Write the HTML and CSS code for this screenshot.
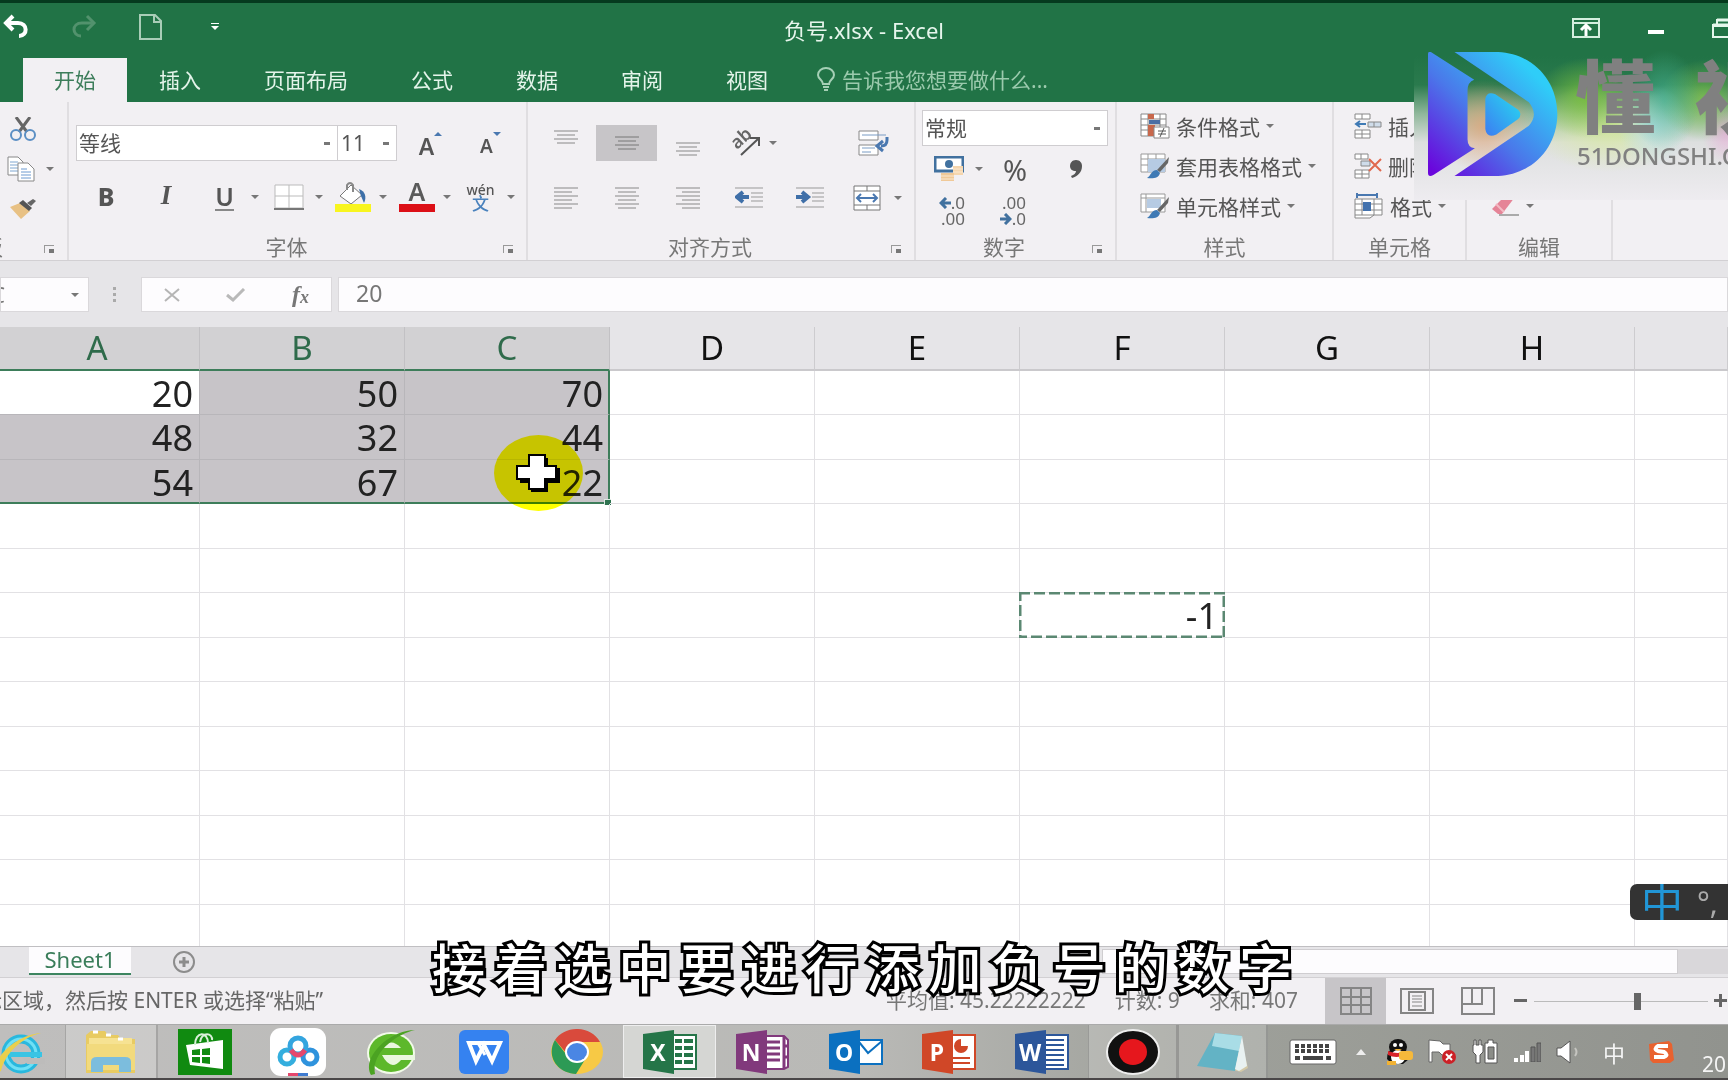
FILE: index.html
```html
<!DOCTYPE html>
<html lang="zh-CN">
<head>
    <meta charset="UTF-8">
    <meta name="viewport" content="width=device-width, initial-scale=1.0">
    <title>负号.xlsx - Excel</title>
    <link rel="stylesheet" href="styles.css">
</head>
<body>
    <header class="titlebar">
        <div class="quick-access">
            <button aria-label="撤消"><svg width="26" height="26" viewBox="0 0 26 26" fill="none" stroke="#fff" stroke-width="4"><path d="M3 9h12c10 0 10 13 1 13"/><path d="M10 2L3 9l7 7"/></svg></button>
            <button aria-label="恢复"><svg width="26" height="26" viewBox="0 0 26 26" fill="none" stroke="#52926d" stroke-width="3"><path d="M23 9H11C0 9 1 22 10 22"/><path d="M16 2l7 7-7 7"/></svg></button>
            <button aria-label="新建"><svg width="24" height="26" viewBox="0 0 24 26" fill="none" stroke="#a9cdb7" stroke-width="2"><path d="M1 1h15l6 6v18H1z"/><path d="M15 1v7h7"/></svg></button>
            <button class="customize" aria-label="自定义快速访问工具栏"><svg width="10" height="8" viewBox="0 0 10 8" fill="#fff"><path d="M1 0h8v1H1zM1 3h8L5 7z"/></svg></button>
        </div>
        <h1 class="doc-title">负号.xlsx - Excel</h1>
        <div class="window-controls">
            <button aria-label="功能区显示选项"><svg width="28" height="20" viewBox="0 0 28 20" fill="none" stroke="#d5efdf" stroke-width="2"><path d="M1 1h26v18H1zM1 5h26"/><path d="M14 18V8M9 12l5-5 5 5" stroke="#fff" stroke-width="3"/></svg></button>
            <button aria-label="最小化"><svg width="16" height="20" viewBox="0 0 16 20"><path d="M0 12h16v4H0z" fill="#fff"/></svg></button>
            <button aria-label="向下还原"><svg width="28" height="20" viewBox="0 0 28 20" fill="none" stroke="#e5f7ec" stroke-width="2"><path d="M1 7h20v12H1zM1 8h20M5 6V2h20v11h-4" /><path d="M5 2h20M1 7h20" stroke-width="3"/></svg></button>
        </div>
    </header>

    <nav class="tabs">
        <button class="tab active">开始</button>
        <button class="tab">插入</button>
        <button class="tab">页面布局</button>
        <button class="tab">公式</button>
        <button class="tab">数据</button>
        <button class="tab">审阅</button>
        <button class="tab">视图</button>
        <button class="tell-me"><svg width="18" height="24" viewBox="0 0 18 24" fill="none" stroke="#a5d0b6" stroke-width="2"><path d="M6 17c0-4-5-5-5-9a8 7 0 0 1 16 0c0 4-5 5-5 9z"/><path d="M6 20h6M7 23h4"/></svg>告诉我您想要做什么...</button>
    </nav>

    <section class="ribbon">
        <div class="group clipboard">
            <div class="rows">
                <button aria-label="剪切"><svg width="26" height="24" viewBox="0 0 26 24" fill="none" stroke-width="2"><path d="M6 0l11 15M20 0L9 15" stroke="#666" stroke-width="3"/><circle cx="6" cy="18" r="5" stroke="#5b8fc4"/><circle cx="20" cy="18" r="5" stroke="#5b8fc4"/></svg></button>
                <button class="copy" aria-label="复制"><svg width="28" height="26" viewBox="0 0 28 26" fill="#fff" stroke="#888"><path d="M1 1h10l5 5v13H1z"/><path d="M3 6h8M3 9h9M3 12h9M3 15h9" stroke="#7fa6d0"/><path d="M11 7h10l6 6v12H11z"/><path d="M14 13h6M14 16h10M14 19h10M14 22h10" stroke="#6c9ad0"/></svg><i class="caret"></i></button>
                <button aria-label="格式刷"><svg width="26" height="20" viewBox="0 0 26 20"><path d="M0 8l10-4 10 8-9 8z" fill="#e8c184"/><path d="M9 4l4-3 9 8-3 3z" fill="#555"/><path d="M17 4l6-4 3 2-5 5z" fill="#666"/></svg></button>
            </div>
            <div class="group-label"><span>剪贴板</span><i class="launcher"></i></div>
        </div>

        <div class="group font">
            <div class="row">
                <select class="font-name" aria-label="字体"><option>等线</option></select>
                <select class="font-size" aria-label="字号"><option>11</option></select>
                <button class="grow" aria-label="增大字号"><span>A</span><i class="up"></i></button>
                <button class="grow small" aria-label="减小字号"><span>A</span><i class="down"></i></button>
            </div>
            <div class="row">
                <button class="plain bold">B</button>
                <button class="plain italic">I</button>
                <button class="split underline"><span>U</span><i class="caret"></i></button>
                <button class="split" aria-label="边框"><svg width="30" height="26" viewBox="0 0 30 26" fill="#fff" stroke="#bbb"><path d="M1 1h28v23H1zM15 1v23M1 12h28"/><path d="M0 25h30" stroke="#777" stroke-width="2"/></svg><i class="caret"></i></button>
                <button class="split" aria-label="填充颜色"><svg width="36" height="30" viewBox="0 0 36 30"><path d="M5 14L16 3l11 10-11 9z" fill="#fff" stroke="#777"/><path d="M12 8V3q3-4 6 0v7" fill="none" stroke="#888" stroke-width="2"/><path d="M24 7c6 2 8 8 5 14l-3-7z" fill="#3d6fa8"/><path d="M0 22h36v8H0z" fill="#f8f51f"/></svg><i class="caret"></i></button>
                <button class="split" aria-label="字体颜色"><svg width="36" height="30" viewBox="0 0 36 30"><text x="18" y="19" class="svg-a">A</text><path d="M0 22h36v8H0z" fill="#dc0f16"/></svg><i class="caret"></i></button>
                <button class="split pinyin" aria-label="拼音"><span>wén<b>文</b></span><i class="caret"></i></button>
            </div>
            <div class="group-label"><span>字体</span><i class="launcher"></i></div>
        </div>

        <div class="group align">
            <div class="align-grid">
                <button aria-label="顶端对齐"><svg width="24" height="26" viewBox="0 0 24 26" stroke="#888"><path d="M0 1h24M3 5h18M0 9h24M3 13h18"/></svg></button>
                <button class="pressed" aria-label="垂直居中"><svg width="24" height="26" viewBox="0 0 24 26" stroke="#777"><path d="M0 7h24M3 11h18M0 15h24M3 19h18"/></svg></button>
                <button aria-label="底端对齐"><svg width="24" height="26" viewBox="0 0 24 26" stroke="#888"><path d="M0 13h24M3 17h18M0 21h24M3 25h18"/></svg></button>
                <button class="with-caret" aria-label="方向"><svg width="30" height="26" viewBox="0 0 30 26"><text x="0" y="0" class="svg-ab" transform="translate(6 20) rotate(-42)">ab</text><path d="M10 25L27 9M19 8h9v8" fill="none" stroke="#555" stroke-width="2"/></svg><i class="caret"></i></button>
                <span></span>
                <button aria-label="自动换行"><svg width="32" height="26" viewBox="0 0 32 26" fill="#fff" stroke="#888"><path d="M1 1h19v9H1zM1 15h19v10H1z"/><path d="M4 5h24" stroke="#7a9cc4"/><path d="M4 18h13M4 22h9" stroke="#7a9cc4"/><path d="M29 7v3q0 6-6 6M25 11l-6 5 6 5" fill="none" stroke="#4a78b0" stroke-width="3"/></svg></button>
                <button aria-label="左对齐"><svg width="24" height="22" viewBox="0 0 24 22" stroke="#888"><path d="M0 1h24M0 5h18M0 9h24M0 13h18M0 17h24M0 21h18"/></svg></button>
                <button aria-label="居中"><svg width="24" height="22" viewBox="0 0 24 22" stroke="#888"><path d="M0 1h24M3 5h18M0 9h24M3 13h18M0 17h24M3 21h18"/></svg></button>
                <button aria-label="右对齐"><svg width="24" height="22" viewBox="0 0 24 22" stroke="#888"><path d="M0 1h24M6 5h18M0 9h24M6 13h18M0 17h24M6 21h18"/></svg></button>
                <button aria-label="减少缩进量"><svg width="28" height="22" viewBox="0 0 28 22" fill="none" stroke="#999"><path d="M0 1h28M16 6h12M16 10h12M16 14h12M0 20h28"/><path d="M14 10H3M8 5l-6 5 6 5" stroke="#3f6fa8" stroke-width="4"/></svg></button>
                <button aria-label="增加缩进量"><svg width="28" height="22" viewBox="0 0 28 22" fill="none" stroke="#999"><path d="M0 1h28M16 6h12M16 10h12M16 14h12M0 20h28"/><path d="M0 10h11M6 5l6 5-6 5" stroke="#3f6fa8" stroke-width="4"/></svg></button>
                <button class="with-caret merge" aria-label="合并后居中"><svg width="28" height="26" viewBox="0 0 28 26" fill="#fff" stroke="#777"><path d="M1 1h26v24H1zM1 6h26M1 20h26M14 1v5M14 20v5"/><path d="M4 13h20M8 9l-4 4 4 4M20 9l4 4-4 4" fill="none" stroke="#4a78b0" stroke-width="2"/></svg><i class="caret"></i></button>
            </div>
            <div class="group-label"><span>对齐方式</span><i class="launcher"></i></div>
        </div>

        <div class="group number">
            <div class="rows">
                <select class="number-format" aria-label="数字格式"><option>常规</option></select>
                <div class="row">
                    <button class="split" aria-label="会计数字格式"><svg width="30" height="26" viewBox="0 0 30 26"><path d="M1 1h28v14H1z" fill="#fff" stroke="#41719f" stroke-width="3"/><circle cx="15" cy="8" r="4" fill="#41719f"/><path d="M19 10h10v9H19z" fill="#f5d6ae"/><path d="M7 17h13v8H7z" fill="#f0c998"/><path d="M19 13h10M19 16h10M7 20h13M7 23h13" stroke="#fbe9d2"/></svg><i class="caret"></i></button>
                    <button class="percent">%</button>
                    <button class="comma" aria-label="千位分隔样式"><svg width="12" height="18" viewBox="0 0 12 18"><path d="M6 0c4 0 6 3 6 6 0 6-4 10-10 12l-1-2c3-1 5-3 5-5-4 0-6-2-6-5s2-6 6-6z" fill="#555"/></svg></button>
                </div>
                <div class="row">
                    <button class="decimal" aria-label="增加小数位数"><span><svg width="12" height="12" viewBox="0 0 12 12" fill="none" stroke="#41719f" stroke-width="3"><path d="M12 6H2M7 1L2 6l5 5"/></svg>.0</span><span>.00</span></button>
                    <button class="decimal" aria-label="减少小数位数"><span>.00</span><span><svg width="12" height="12" viewBox="0 0 12 12" fill="none" stroke="#41719f" stroke-width="3"><path d="M0 6h10M5 1l5 5-5 5"/></svg>.0</span></button>
                </div>
            </div>
            <div class="group-label"><span>数字</span><i class="launcher"></i></div>
        </div>

        <div class="group styles">
            <div class="rows">
                <button class="command"><svg width="30" height="26" viewBox="0 0 30 26"><path d="M1 1h25v22H1zM1 6h25M1 12h25M1 17h25M8 1v22M20 1v22" fill="#fff" stroke="#888"/><path d="M8 1h6v5H8zM8 12h7v11H8z" fill="#c8684c"/><path d="M9 7h11v4H9z" fill="#4b6fa5"/><path d="M14 14h15v11H14z" fill="#fff" stroke="#888"/><path d="M18 18h8M18 21h8M24 15l-4 9" stroke="#555"/></svg>条件格式<i class="caret"></i></button>
                <button class="command"><svg width="30" height="26" viewBox="0 0 30 26"><path d="M1 1h24v18H1zM1 6h24M1 12h24M8 1v18M16 1v18" fill="#fff" stroke="#999"/><path d="M8 6h17v13H8z" fill="#b6cbe3"/><path d="M29 4l-1 6-8 9-3-2z" fill="#666"/><path d="M17 17l3 3c-1 5-7 6-13 5 4-2 4-8 10-8z" fill="#3f7ab5"/></svg>套用表格格式<i class="caret"></i></button>
                <button class="command"><svg width="30" height="26" viewBox="0 0 30 26"><path d="M1 1h24v18H1zM1 5h24M6 1v18" fill="#fff" stroke="#999"/><path d="M7 6h14v9H7z" fill="#b6cbe3"/><path d="M29 4l-1 6-8 9-3-2z" fill="#666"/><path d="M17 17l3 3c-1 5-7 6-13 5 4-2 4-8 10-8z" fill="#3f7ab5"/></svg>单元格样式<i class="caret"></i></button>
            </div>
            <div class="group-label"><span>样式</span></div>
        </div>

        <div class="group cells">
            <div class="rows">
                <button class="command"><svg width="28" height="26" viewBox="0 0 28 26" fill="#fff" stroke="#888"><path d="M1 1h15v5H1zM8 1v5M1 17h15v8H1zM8 17v8M1 21h15"/><path d="M14 9h13v5H14zM20 9v5" fill="#cfdcea"/><path d="M12 11H2M6 8l-4 3 4 3" stroke="#3f7ab5" stroke-width="2" fill="none"/></svg>插入<i class="caret"></i></button>
                <button class="command"><svg width="28" height="26" viewBox="0 0 28 26" fill="#fff" stroke="#888"><path d="M1 1h13v5H1zM7 1v5M1 17h14v8H1zM8 17v8M1 21h14"/><path d="M7 8h9v5H7z" fill="#cfdcea"/><path d="M15 6l12 12M27 6L15 18" stroke="#e0694e" stroke-width="2"/></svg>删除<i class="caret"></i></button>
                <button class="command"><svg width="30" height="26" viewBox="0 0 30 26" fill="#fff" stroke="#888"><path d="M3 2h20M3 0v5M23 0v5" stroke="#4a78b0" stroke-width="2"/><path d="M1 6h27v16H1zM1 11h27M1 17h27M8 6v16M20 6v16M1 22v3h15l4-3"/><path d="M9 9h8v9H9z" fill="#4372ad" stroke="none"/></svg>格式<i class="caret"></i></button>
            </div>
            <div class="group-label"><span>单元格</span></div>
        </div>

        <div class="group edit">
            <div class="rows">
                <span></span>
                <span></span>
                <button class="command eraser" aria-label="清除"><svg width="28" height="22" viewBox="0 0 28 22"><path d="M0 14L12 2h11L10 19H6z" fill="#e58497"/><path d="M4 9l8 8" stroke="#f3b9c3" stroke-width="2"/><path d="M7 20h20" stroke="#aaa" stroke-width="2"/></svg><i class="caret"></i></button>
            </div>
            <div class="group-label"><span>编辑</span></div>
        </div>
    </section>

    <section class="formula-bar">
        <div class="name-box"><input type="text" value="3R x 3C" aria-label="名称框"><i class="caret"></i></div>
        <svg class="grip" width="4" height="16" viewBox="0 0 4 16" fill="#aaa"><path d="M0 0h3v3H0zM0 6h3v3H0zM0 12h3v3H0z"/></svg>
        <div class="formula-buttons">
            <button aria-label="取消"><svg width="16" height="14" viewBox="0 0 16 14"><path d="M1 1l14 12M15 1L1 13" stroke="#b5b5b5" stroke-width="2"/></svg></button>
            <button aria-label="输入"><svg width="20" height="14" viewBox="0 0 20 14"><path d="M1 7l6 5L18 1" fill="none" stroke="#b9b9b9" stroke-width="3"/></svg></button>
            <button class="fx" aria-label="插入函数">f<small>x</small></button>
        </div>
        <input class="formula" type="text" value="20" aria-label="编辑栏">
    </section>

    <main class="sheet">
        <table>
            <thead>
                <tr><th class="col-a sel">A</th><th class="sel">B</th><th class="sel">C</th><th>D</th><th>E</th><th>F</th><th>G</th><th>H</th><th class="rest"></th></tr>
            </thead>
            <tbody>
                <tr><td class="sel active">20</td><td class="sel">50</td><td class="sel edge">70</td><td></td><td></td><td></td><td></td><td></td><td></td></tr>
                <tr><td class="sel">48</td><td class="sel">32</td><td class="sel edge">44</td><td></td><td></td><td></td><td></td><td></td><td></td></tr>
                <tr class="last-sel"><td class="sel">54</td><td class="sel">67</td><td class="sel edge">22<i class="fill-handle"></i></td><td></td><td></td><td></td><td></td><td></td><td></td></tr>
                <tr><td></td><td></td><td></td><td></td><td></td><td></td><td></td><td></td><td></td></tr>
                <tr><td></td><td></td><td></td><td></td><td></td><td></td><td></td><td></td><td></td></tr>
                <tr><td></td><td></td><td></td><td></td><td></td><td class="copied">-1<svg class="ants"><rect width="100%" height="100%"/></svg></td><td></td><td></td><td></td></tr>
                <tr><td></td><td></td><td></td><td></td><td></td><td></td><td></td><td></td><td></td></tr>
                <tr><td></td><td></td><td></td><td></td><td></td><td></td><td></td><td></td><td></td></tr>
                <tr><td></td><td></td><td></td><td></td><td></td><td></td><td></td><td></td><td></td></tr>
                <tr><td></td><td></td><td></td><td></td><td></td><td></td><td></td><td></td><td></td></tr>
                <tr><td></td><td></td><td></td><td></td><td></td><td></td><td></td><td></td><td></td></tr>
                <tr><td></td><td></td><td></td><td></td><td></td><td></td><td></td><td></td><td></td></tr>
                <tr><td></td><td></td><td></td><td></td><td></td><td></td><td></td><td></td><td></td></tr>
            </tbody>
        </table>
        <div class="click-spot"></div>
        <svg class="cursor" width="44" height="38" viewBox="0 0 44 38"><path d="M15 4h17v10h12v15H32v9H15v-9H4V14h11z" fill="#000"/><path d="M13 1h16v11h11v13H29v10H13V25H1V12h12z" fill="#fff" stroke="#000" stroke-width="2"/></svg>
        <div class="ime"><b>中</b><span>°,</span></div>
    </main>

    <section class="sheet-bar">
        <button class="sheet-tab">Sheet1</button>
        <button class="add-sheet" aria-label="新工作表"><svg width="24" height="24" viewBox="0 0 24 24" fill="none" stroke="#8c8c8c" stroke-width="2"><circle cx="12" cy="12" r="10"/><path d="M12 7v10M7 12h10" stroke-width="3"/></svg></button>
        <div class="scrollbar"><div class="thumb"></div></div>
    </section>

    <footer class="status">
        <span class="message">选定目标区域，然后按 ENTER 或选择“粘贴”</span>
        <div class="stats"><span>平均值: 45.22222222</span><span>计数: 9</span><span>求和: 407</span></div>
        <div class="views">
            <button class="pressed" aria-label="普通"><svg width="32" height="28" viewBox="0 0 32 28" fill="none" stroke="#858585" stroke-width="2"><path d="M1 1h30v26H1zM1 10h30M1 18h30M11 1v26M21 1v26"/></svg></button>
            <button aria-label="页面布局"><svg width="34" height="26" viewBox="0 0 34 26" fill="none" stroke="#858585" stroke-width="2"><path d="M1 1h32v24H1zM9 4h16v18H9z"/><path d="M12 8h10M12 11h10M12 14h10M12 18h10" stroke-width="1"/></svg></button>
            <button aria-label="分页预览"><svg width="34" height="28" viewBox="0 0 34 28" fill="none" stroke="#858585" stroke-width="2"><path d="M1 1h32v26H1zM1 17h20V1M11 1v16"/></svg></button>
        </div>
        <div class="zoom">
            <button aria-label="缩小"><svg width="14" height="14" viewBox="0 0 14 14"><path d="M0 5h13v3H0z" fill="#666"/></svg></button>
            <input type="range" min="0" max="100" value="60" aria-label="缩放">
            <button aria-label="放大"><svg width="14" height="14" viewBox="0 0 14 14"><path d="M0 5h13v3H0zM5 0h3v13H5z" fill="#666"/></svg></button>
        </div>
    </footer>

    <nav class="taskbar">
        <div class="apps">
            <button aria-label="Internet Explorer"><svg width="52" height="46" viewBox="0 0 52 46"><circle cx="28" cy="25" r="15" fill="none" stroke="#29b8de" stroke-width="9"/><circle cx="28" cy="25" r="15" fill="none" stroke="#6fe0f5" stroke-width="3"/><path d="M30 29h22v6H34z" fill="#bdbcbb"/><path d="M16 23h33v5H16z" fill="#39c4e4"/><path d="M4 44C-4 34 20 6 48 4 30 8 12 24 8 42z" fill="#e9cf4e"/></svg></button>
            <button class="running" aria-label="文件资源管理器"><svg width="50" height="44" viewBox="0 0 50 44"><path d="M0 5l5-4h14l3 4h10l3 4h14v34H0z" fill="#e8cb62"/><path d="M3 8h43v30H3z" fill="#f6e292"/><path d="M1 14h48v26H1z" fill="#f2da7d"/><path d="M5 42V32q0-5 6-5h28q6 0 6 5v10H33v-7H17v7z" fill="#7cbddd"/><path d="M7 2h5M20 5h5M32 9h5" stroke="#fff" stroke-width="3"/></svg></button>
            <button aria-label="应用商店"><svg width="54" height="46" viewBox="0 0 54 46"><path d="M0 0h54v46H0z" fill="#108a10"/><path d="M8 16l37-5v29L12 36z" fill="#fff"/><path d="M17 16C17 2 30 2 30 14M22 13C24 2 35 4 34 11" fill="none" stroke="#d9f0d9" stroke-width="2"/><path d="M14 21l8-1v6h-8zM24 20l8-1v7h-8zM14 28h8v6l-8-1zM24 28h8v7l-8-1z" fill="#108a10"/></svg></button>
            <button aria-label="百度网盘"><svg width="56" height="48" viewBox="0 0 56 48"><rect width="56" height="48" rx="11" fill="#fff"/><g fill="none" stroke-width="5"><circle cx="17" cy="29" r="7" stroke="#34aede"/><circle cx="40" cy="29" r="7" stroke="#2f93dd"/><circle cx="28" cy="18" r="8" stroke="#34a5df"/><path d="M21 22q7 10 14 0" stroke="#e5476c"/></g><path d="M18 45h10v3H18z" fill="#e5476c"/><path d="M28 45h10v3H28z" fill="#3f7bd0"/></svg></button>
            <button aria-label="360浏览器"><svg width="52" height="48" viewBox="0 0 52 48"><ellipse cx="26" cy="25" rx="24" ry="21" fill="#f2fbe9"/><ellipse cx="26" cy="25" rx="22" ry="19" fill="#5db82b"/><path d="M17 20q9-11 19 0zM17 27h33v5H36q-10 12-19-5z" fill="#e9f7df"/><path d="M6 47C-4 30 24 2 50 2 32 6 6 24 10 46z" fill="#4ba322"/></svg></button>
            <button aria-label="WPS"><svg width="50" height="44" viewBox="0 0 50 44"><rect width="50" height="44" rx="6" fill="#3582f0"/><path d="M10 13h31L33 31l-8-16-8 16z" fill="none" stroke="#fff" stroke-width="4"/><path d="M19 13l7 12" stroke="#fff" stroke-width="3"/></svg></button>
            <button aria-label="Chrome"><svg width="52" height="46" viewBox="0 0 52 46"><ellipse cx="26" cy="23" rx="26" ry="22" fill="#f7c945"/><path d="M4 11C14-4 40-4 49 13H26L17 26z" fill="#d94a3c"/><path d="M4 11C-5 26 5 44 25 45l10-16H18z" fill="#2c9a55"/><ellipse cx="26" cy="23" rx="12" ry="11" fill="#fff"/><ellipse cx="26" cy="23" rx="10" ry="9" fill="#4a86e4"/></svg></button>
            <button class="current" aria-label="Excel"><svg width="54" height="44" viewBox="0 0 54 44"><path d="M28 5h25v34H28z" fill="#fff" stroke="#257548" stroke-width="2"/><path d="M32 9h7v4h-7zM41 9h9v4h-9zM32 16h7v4h-7zM41 16h9v4h-9zM32 23h7v4h-7zM41 23h9v4h-9zM32 30h7v4h-7zM41 30h9v4h-9z" fill="#257548"/><path d="M0 4l31-4v44L0 39z" fill="#257548"/><text x="15" y="31" class="app-letter">X</text></svg></button>
            <button aria-label="OneNote"><svg width="54" height="44" viewBox="0 0 54 44"><path d="M28 6h20l4 4v27l-4 2H28z" fill="#fff" stroke="#81397c" stroke-width="2"/><path d="M30 12h14M30 18h14M30 24h14M30 30h14M48 6v33M48 16h5M48 27h5" stroke="#81397c" stroke-width="3"/><path d="M0 4l31-4v44L0 39z" fill="#81397c"/><text x="15" y="31" class="app-letter">N</text></svg></button>
            <button aria-label="Outlook"><svg width="54" height="44" viewBox="0 0 54 44"><path d="M28 10h25v24H28z" fill="#fff" stroke="#0b70c0" stroke-width="2"/><path d="M30 12l9 11 14-12" fill="none" stroke="#0b70c0" stroke-width="2"/><path d="M0 4l31-4v44L0 39z" fill="#0b70c0"/><text x="15" y="31" class="app-letter">O</text></svg></button>
            <button aria-label="PowerPoint"><svg width="54" height="44" viewBox="0 0 54 44"><path d="M28 5h25v34H28z" fill="#fff" stroke="#d04727" stroke-width="2"/><circle cx="39" cy="16" r="7" fill="#d04727"/><path d="M39 16V8q8 0 8 8z" fill="#fff"/><path d="M31 28h17M31 33h17" stroke="#d04727" stroke-width="2"/><path d="M0 4l31-4v44L0 39z" fill="#d04727"/><text x="15" y="31" class="app-letter">P</text></svg></button>
            <button aria-label="Word"><svg width="54" height="44" viewBox="0 0 54 44"><path d="M28 5h25v34H28z" fill="#fff" stroke="#2c569a" stroke-width="2"/><path d="M31 10h18M31 15h18M31 20h18M31 25h18M31 30h18M31 35h18" stroke="#2c569a" stroke-width="2"/><path d="M0 4l31-4v44L0 39z" fill="#2c569a"/><text x="15" y="31" class="app-letter">W</text></svg></button>
            <button class="running narrow" aria-label="录屏"><svg width="54" height="46" viewBox="0 0 54 46"><ellipse cx="27" cy="23" rx="26" ry="22" fill="#111" stroke="#eee" stroke-width="2"/><ellipse cx="27" cy="23" rx="14" ry="13" fill="#e6171d"/></svg></button>
            <button class="running narrow" aria-label="记事本"><svg width="52" height="40" viewBox="0 0 52 40"><path d="M43 4l8 32-7 4-12-3z" fill="#d3c9a8"/><path d="M18 1l27 3-7 35-38-5z" fill="#63b3c5"/><path d="M18 1l27 3-3 15-27-5z" fill="#a9dde6"/><path d="M45 4l5 30-8 5-4-2z" fill="#e9f2f2"/></svg></button>
        </div>
        <div class="tray">
            <button class="keyboard" aria-label="触摸键盘"><svg width="48" height="26" viewBox="0 0 48 26"><rect x="1" y="1" width="46" height="24" rx="2" fill="#fff" stroke="#666"/><path d="M6 7h36M6 12h36" stroke="#444" stroke-width="4" stroke-dasharray="4 2"/><path d="M6 19h5M14 19h20M37 19h5" stroke="#444" stroke-width="4"/></svg></button>
            <button class="tray-more" aria-label="显示隐藏的图标"><svg width="10" height="6" viewBox="0 0 10 6"><path d="M0 6l5-6 5 6z" fill="#eee"/></svg></button>
            <button aria-label="QQ"><svg width="28" height="26" viewBox="0 0 28 26"><ellipse cx="13" cy="8" rx="9" ry="8" fill="#111"/><path d="M2 20q0-9 6-10h10q6 2 6 10l-6 5H7z" fill="#111"/><ellipse cx="13" cy="18" rx="7" ry="7" fill="#fff"/><path d="M3 12q10 4 18 0v4q-10 4-18 0z" fill="#d8232a"/><circle cx="10" cy="6" r="2" fill="#fff"/><circle cx="16" cy="6" r="2" fill="#fff"/><path d="M9 10h8l-4 2zM2 22h9v4H2z" fill="#f2b233"/><rect x="14" y="12" width="14" height="9" rx="3" fill="#f6b93b"/></svg></button>
            <button aria-label="操作中心"><svg width="30" height="26" viewBox="0 0 30 26"><path d="M2 1v22h3V13h7l3 3h8V5h-7l-3-3z" fill="#fff" stroke="#666"/><circle cx="22" cy="18" r="7" fill="#cc2127"/><path d="M19 15l6 6M25 15l-6 6" stroke="#fff" stroke-width="2"/></svg></button>
            <button aria-label="电源"><svg width="28" height="26" viewBox="0 0 28 26" fill="#fff" stroke="#555"><path d="M3 1h2v5h3V1h2v5h2v7l-3 3v8H5v-8l-3-3V6h1z"/><path d="M14 4h3V1h5v3h4v20H14z"/><path d="M17 8h6v12h-6z" fill="#8b8d88"/></svg></button>
            <button aria-label="网络"><svg width="28" height="20" viewBox="0 0 28 20"><path d="M1 16h4v4H1zM7 13h4v7H7zM12 9h4v11h-4z" fill="#fff"/><path d="M18 5h4v15h-4zM24 1h4v19h-4z" fill="#777" stroke="#555"/></svg></button>
            <button aria-label="音量"><svg width="26" height="24" viewBox="0 0 26 24"><path d="M2 8h4l9-7v22l-9-7H2z" fill="#fff" stroke="#555"/><path d="M20 8q3 4 0 8" fill="none" stroke="#c5c5c0" stroke-width="2"/></svg></button>
            <button class="lang">中</button>
            <button aria-label="搜狗输入法"><svg width="28" height="24" viewBox="0 0 28 24"><path d="M2 4l20-3 3 3 2 16-4 3H6L3 20z" fill="#e9622f"/><path d="M21 6H11q-5 3 0 5l6 1q5 3 0 5H7" fill="none" stroke="#fff" stroke-width="4"/></svg></button>
            <time>2018</time>
        </div>
    </nav>

    <aside class="watermark">
        <svg width="130" height="124" viewBox="84 155 388 370" preserveAspectRatio="none">
            <defs><linearGradient id="brand" gradientUnits="userSpaceOnUse" x1="110" y1="520" x2="400" y2="220"><stop offset="0" stop-color="#6a06dc"/><stop offset=".5" stop-color="#4a78ea"/><stop offset="1" stop-color="#2fcdf8"/></linearGradient>
            <linearGradient id="play" x1="0" y1="1" x2="1" y2="0"><stop offset="0" stop-color="#3d7cf2"/><stop offset="1" stop-color="#26dcf0"/></linearGradient></defs>
            <path d="M84 162q0-12 12-5l126 81q-20 7-20 32v145q0 25 22 27l-124 80q-16 8-16-7z" fill="url(#brand)"/>
            <path d="M163 155h130c100 4 177 82 177 185s-77 181-177 185H163l222-150q30-33 0-70z" fill="url(#brand)"/>
            <path d="M255 295q4-24 30-14l68 46q14 14 0 28l-65 46q-29 12-33-16z" fill="url(#play)"/>
        </svg>
        <div class="brand-text">
            <div class="brand-name"><span>懂</span><span>视</span></div>
            <div class="brand-url">51DONGSHI.COM</div>
        </div>
    </aside>

    <p class="caption">接着选中要进行添加负号的数字</p>
</body>
</html>
```
FILE: styles.css
```css
* {
    box-sizing: border-box;
}
body {
    margin: 0;
    height: 100vh;
    display: flex;
    flex-direction: column;
    position: relative;
    overflow: hidden;
    background: #e6e5e8;
    color: #555;
    font-family: "Noto Sans", "Noto Sans CJK SC", sans-serif;
    font-size: 21px;
}
button, input, select {
    font: inherit;
    color: inherit;
    border: 0;
    border-radius: 0;
    padding: 0;
    margin: 0;
    background: none;
}
button {
    display: flex;
    align-items: center;
    justify-content: center;
    white-space: nowrap;
}
svg {
    display: block;
    flex: none;
}
.caret {
    flex: none;
    width: 0;
    border: 4px solid transparent;
    border-top-color: #777;
    border-bottom: 0;
}

/* title bar and tabs */
.titlebar {
    height: 58px;
    border-top: 3px solid #053a1e;
    background: #217346;
    display: grid;
    grid-template-columns: 1fr auto 1fr;
    color: #e6f5ec;
}
.quick-access {
    display: flex;
    padding: 0 0 8px 3px;
    gap: 42px;
}
.customize {
    margin-left: 5px;
}
.doc-title {
    margin: 0;
    font-size: 22px;
    font-weight: 400;
    line-height: 54px;
}
.window-controls {
    display: flex;
    justify-content: flex-end;
    gap: 48px;
    padding-bottom: 6px;
    margin-right: -12px;
}
.tabs {
    height: 44px;
    background: #217346;
    display: flex;
    gap: 1px;
    padding-left: 23px;
    color: #e4f4ea;
}
.tab {
    padding: 0 31px 3px;
}
.tab.active {
    background: #f2f0f3;
    color: #3c7d5a;
}
.tell-me {
    color: #9bcaad;
    gap: 7px;
    margin-left: 17px;
    padding-bottom: 3px;
}

/* ribbon */
.ribbon {
    height: 159px;
    background: #f2f0f3;
    border-bottom: 1px solid #d2d0d3;
    display: flex;
}
.group {
    flex: none;
    display: flex;
    flex-direction: column;
    position: relative;
    padding: 8px 7px 0;
    border-right: 2px solid #e0dee1;
    overflow: hidden;
}
.rows {
    display: grid;
    grid-template-rows: repeat(3, 38px);
    gap: 2px;
}
.row {
    display: flex;
    height: 36px;
}
.group-label {
    display: flex;
    align-items: center;
    margin: auto 0 0;
    height: 26px;
    line-height: 26px;
    color: #777;
}
.group-label span {
    flex: 1;
    text-align: center;
    white-space: nowrap;
}
.launcher {
    width: 10px;
    height: 8px;
    border: 1px solid #999;
    border-width: 1px 0 0 1px;
    margin: 4px 6px 0;
    background: linear-gradient(#777, #777) right bottom / 5px 4px no-repeat;
}
.clipboard {
    width: 69px;
    padding: 8px 0 0;
}
.clipboard .rows {
    padding-left: 7px;
}
.clipboard button {
    justify-content: flex-start;
    padding-left: 3px;
}
.clipboard .copy {
    padding-left: 0;
    gap: 11px;
}
.clipboard .group-label {
    justify-content: space-between;
    padding-right: 7px;
}
.clipboard .group-label span {
    flex: none;
    margin-left: -60px;
}
.font {
    width: 459px;
    padding-top: 23px;
}
.font .row + .row {
    margin: 18px 0 0 2px;
}
select {
    appearance: none;
    height: 36px;
    padding-left: 2px;
    border: 1px solid #cfcdd0;
    background: #fff linear-gradient(#777, #777) right 7px center / 6px 3px no-repeat;
}
.font-name {
    width: 262px;
    margin-right: -1px;
}
.font-size {
    width: 60px;
    padding-left: 3px;
}
.grow {
    width: 60px;
    padding-left: 7px;
    font-size: 23px;
    font-weight: 600;
    align-items: flex-end;
}
.grow span {
    line-height: 30px;
}
.grow.small {
    font-size: 19px;
}
.grow i {
    border: 4px solid transparent;
    border-top: 0;
    border-bottom-color: #4a78b0;
    margin-bottom: 25px;
}
.grow .down {
    border-top: 4px solid #4a78b0;
    border-bottom: 0;
}
.plain {
    width: 56px;
    font-size: 25px;
    padding-bottom: 3px;
}
.bold {
    font-weight: 800;
}
.italic {
    width: 64px;
    font: italic bold 27px "Liberation Serif", serif;
}
.split {
    width: 64px;
    justify-content: flex-end;
}
.split > :first-child {
    margin: 0 auto;
}
.split .caret {
    margin-right: 3px;
}
.underline span {
    font-size: 25px;
    font-weight: 600;
    line-height: 26px;
    border-bottom: 2px solid #888;
}
.svg-a {
    font-size: 25px;
    font-weight: 600;
    text-anchor: middle;
    fill: #5a5a5a;
}
.svg-ab {
    font-size: 18px;
    font-weight: 600;
    fill: #666;
}
.pinyin span {
    font-size: 14px;
    font-weight: 500;
    line-height: 12px;
}
.pinyin b {
    display: block;
    font-size: 17px;
    font-weight: 500;
    line-height: 15px;
    color: #4a82bd;
}
.align {
    width: 388px;
    padding-top: 23px;
}
.align-grid {
    display: grid;
    grid-template-columns: repeat(5, 61px) 68px;
    grid-auto-rows: 36px;
    row-gap: 19px;
}
.pressed {
    background: #c7c5c8;
}
.with-caret {
    gap: 8px;
    padding-left: 10px;
}
.merge {
    gap: 13px;
    padding-left: 6px;
}
.number {
    width: 201px;
    padding-left: 6px;
}
.number-format {
    width: 186px;
}
.number .row {
    height: 38px;
}
.percent {
    width: 58px;
    font-size: 29px;
}
.comma {
    width: 64px;
}
.decimal {
    width: 61px;
    flex-direction: column;
    align-items: flex-end;
    padding: 3px 18px 0 0;
    font-size: 17px;
    line-height: 16px;
    color: #666;
}
.decimal span {
    display: flex;
    align-items: center;
}
.styles {
    width: 217px;
    padding: 5px 0 0 23px;
}
.styles .group-label {
    margin-left: -23px;
}
.command {
    justify-content: flex-start;
    gap: 6px;
}
.cells {
    width: 133px;
    padding: 5px 0 0 20px;
}
.cells .group-label {
    margin-left: -20px;
}
.edit {
    width: 146px;
    padding: 5px 0 0 25px;
}
.edit .group-label {
    margin-left: -25px;
}

/* formula bar */
.formula-bar {
    height: 66px;
    padding: 16px 0 15px;
    display: flex;
    align-items: stretch;
    color: #777;
}
.name-box, .formula-buttons, .formula {
    background: #fdfcfe;
    border: 1px solid #dad8db;
}
.name-box {
    width: 89px;
    display: flex;
    align-items: center;
    justify-content: space-between;
    padding-right: 9px;
    overflow: hidden;
}
.name-box input {
    width: 104px;
    margin-left: -100px;
    text-align: right;
}
.grip {
    margin: 10px 24px 0;
}
.formula-buttons {
    width: 191px;
    display: flex;
    justify-content: space-between;
    padding: 0 22px;
}
.fx {
    font: italic bold 24px "Liberation Serif", serif;
}
.fx small {
    font-size: 18px;
    margin-top: 6px;
}
.formula {
    flex: 1;
    min-width: 0;
    margin-left: 6px;
    padding: 0 0 3px 17px;
    font-size: 23px;
}

/* worksheet */
.sheet {
    flex: 1;
    min-height: 0;
    position: relative;
    overflow: hidden;
    background: #fff;
}
.sheet table {
    width: 100%;
    table-layout: fixed;
    border-collapse: separate;
    border-spacing: 0;
}
.sheet th {
    width: 205px;
    height: 44px;
    padding: 0;
    font-size: 33px;
    line-height: 40px;
    font-weight: 400;
    color: #111;
    background: #e6e5e8;
    border-right: 1px solid #cdcccf;
    border-bottom: 2px solid #cac9cc;
}
.sheet th.sel {
    color: #2f6b4b;
    background: #d2d1d3;
    border-right-color: #c2c1c4;
    border-bottom-color: #3d7d5a;
}
.sheet .col-a {
    width: 200px;
    padding-right: 5px;
}
.sheet .rest {
    width: auto;
}
.sheet td {
    position: relative;
    height: 44px;
    padding: 2px 6px 0 0;
    text-align: right;
    font-size: 36px;
    line-height: 40px;
    color: #222;
    border-right: 1px solid #e2e1e4;
    border-bottom: 1px solid #e2e1e4;
}
.sheet tbody tr:nth-child(even) td {
    height: 45px;
}
.sheet td.sel {
    background: #c7c4c8;
    border-color: #b8b6ba;
}
.sheet td.active {
    background: #fff;
}
.sheet td.edge {
    border-right: 2px solid #3d7d5a;
    padding-right: 5px;
}
.sheet .last-sel td.sel {
    border-bottom: 2px solid #3d7d5a;
    line-height: 39px;
}
.fill-handle {
    position: absolute;
    right: -3px;
    bottom: -3px;
    width: 7px;
    height: 6px;
    background: #2f7350;
    border: 1px solid #dfe9e3;
    border-width: 1px 0 0 1px;
}
.ants {
    position: absolute;
    left: -1px;
    top: -1px;
    width: calc(100% + 2px);
    height: calc(100% + 2px);
    overflow: hidden;
}
.ants rect {
    fill: none;
    stroke: #5b8872;
    stroke-width: 5;
    stroke-dasharray: 11 4;
}
.click-spot {
    position: absolute;
    left: 494px;
    top: 108px;
    width: 89px;
    height: 76px;
    border-radius: 50%;
    background: #ffff00;
    mix-blend-mode: multiply;
}
.cursor {
    position: absolute;
    left: 516px;
    top: 127px;
}
.ime {
    position: absolute;
    right: -12px;
    bottom: 26px;
    width: 110px;
    height: 36px;
    border-radius: 7px;
    overflow: hidden;
    background: #333;
    display: flex;
    align-items: center;
    padding-left: 11px;
    gap: 14px;
    font-size: 30px;
    color: #aaa;
}
.ime b {
    font-size: 42px;
    font-weight: 400;
    line-height: 36px;
    color: #2196d6;
}

/* sheet tabs */
.sheet-bar {
    height: 32px;
    border-top: 1px solid #c0bfc2;
    border-bottom: 1px solid #d2d0d3;
    display: flex;
    align-items: flex-start;
    padding-left: 29px;
}
.sheet-tab {
    width: 102px;
    height: 28px;
    background: #fdfcfe;
    border-bottom: 2px solid #3d8560;
    color: #3a7d5a;
    font-size: 22px;
    line-height: 24px;
    padding-bottom: 2px;
}
.add-sheet {
    margin: 3px 0 0 41px;
}
.scrollbar {
    width: 626px;
    height: 25px;
    margin: 2px 0 0 auto;
    background: #d9d7da;
}
.thumb {
    width: 576px;
    height: 25px;
    background: #fdfcfe;
    border: 1px solid #cfcdd0;
}

/* status bar */
.status {
    height: 46px;
    background: #f2f0f3;
    display: flex;
    align-items: center;
    white-space: nowrap;
    overflow: hidden;
    color: #666;
}
.message {
    flex: 1;
    margin-left: -82px;
    padding-bottom: 4px;
}
.stats {
    display: flex;
    gap: 29px;
    margin-right: 27px;
    padding-bottom: 4px;
    color: #777;
}
.views {
    display: flex;
    align-self: stretch;
}
.views button {
    width: 61px;
}
.zoom {
    display: flex;
    align-items: center;
    gap: 6px;
    margin-left: 6px;
}
.zoom input {
    appearance: none;
    width: 174px;
    height: 18px;
    background: linear-gradient(#bbb, #bbb) center / 100% 1px no-repeat;
}
.zoom input::-webkit-slider-thumb {
    appearance: none;
    width: 7px;
    height: 17px;
    background: #666;
}

/* taskbar */
.taskbar {
    height: 56px;
    display: flex;
    justify-content: space-between;
    background: linear-gradient(90deg, #bfbebd, #b9b9b6 50%, #9fa19b 68%, #91938e);
    border-top: 1px solid #aaa;
    border-bottom: 2px solid #4a4748;
    overflow: hidden;
}
.apps {
    display: flex;
    margin-left: -28px;
}
.apps button {
    width: 93px;
}
.apps .narrow {
    width: 90px;
}
.apps .running {
    background: rgba(255, 255, 255, .2);
    border: 1px solid rgba(110, 110, 110, .4);
    border-width: 0 2px 0 1px;
}
.apps .current {
    background: #d5d6d3;
    border: 1px solid #eee;
}
.app-letter {
    font-size: 23px;
    font-weight: 700;
    text-anchor: middle;
    fill: #fff;
}
.tray {
    flex: none;
    display: flex;
    align-items: center;
    gap: 14px;
    margin-right: -22px;
    color: #f5f5f5;
}
.tray .tray-more {
    margin: 0 5px;
}
.lang {
    width: 38px;
    font-size: 22px;
}
.tray time {
    margin: 24px 0 0 13px;
    line-height: 24px;
}

/* overlays */
.watermark {
    position: absolute;
    right: 0;
    top: 40px;
    width: 314px;
    height: 160px;
    padding: 12px 0 0 14px;
    display: flex;
    gap: 20px;
    overflow: hidden;
    background:
        radial-gradient(24px 30px at 312px 94px, rgba(235, 165, 215, .6), transparent),
        radial-gradient(36px 50px at 250px 60px, rgba(70, 180, 150, .7), transparent),
        radial-gradient(50px 40px at 172px 58px, rgba(120, 190, 60, .9), transparent),
        radial-gradient(45px 40px at 290px 60px, rgba(130, 195, 75, .8), transparent),
        radial-gradient(36px 40px at 240px 86px, rgba(190, 225, 235, .9), transparent),
        radial-gradient(80px 44px at 195px 88px, rgba(215, 235, 150, .8), transparent),
        radial-gradient(50px 46px at 70px 86px, rgba(225, 165, 120, .8), transparent),
        linear-gradient(#217346 10%, #2a7a4d 28%, #8fb79a 46%, #dddfdf 64%, #eeecf0);
}
.brand-text {
    color: #808080;
}
.brand-name {
    display: flex;
    gap: 39px;
    margin-left: -3px;
    font-size: 80px;
    font-weight: 900;
    line-height: 88px;
}
.brand-url {
    margin-left: -1px;
    font-size: 24px;
    font-weight: 500;
    line-height: 32px;
}
.caption {
    position: absolute;
    left: 25%;
    right: 25%;
    bottom: 79px;
    margin: 0;
    padding-right: 4px;
    font-size: 53px;
    font-weight: 500;
    line-height: 64px;
    text-align-last: justify;
    white-space: nowrap;
    color: #fff;
    -webkit-text-stroke: 6px #000;
    paint-order: stroke fill;
}
```
